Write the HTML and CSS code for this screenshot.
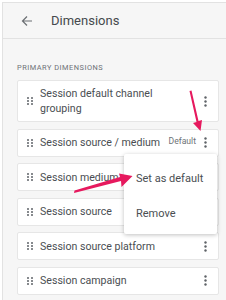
FILE: index.html
```html
<!DOCTYPE html>
<html lang="en">
<head>
    <meta charset="UTF-8">
    <meta name="viewport" content="width=device-width, initial-scale=1.0">
    <title>Dimensions</title>
    <link rel="stylesheet" href="styles.css">
</head>
<body>

    <div class="panel">
        <div class="head">
            <svg class="back" width="12" height="12" viewBox="0 0 12 12">
                <path d="M11 6H2M6 1.5L1.5 6L6 10.5" fill="none" stroke="#6b6f73" stroke-width="1.2"/>
            </svg>
            <span class="title">Dimensions</span>
        </div>

        <div class="content">
            <div class="label">PRIMARY DIMENSIONS</div>

            <div class="list">
                <div class="card tall">
                    <svg class="handle" width="6" height="8" viewBox="0 0 6 8"><g fill="#5f6368"><circle cx="1" cy="1" r="1"/><circle cx="5" cy="1" r="1"/><circle cx="1" cy="4" r="1"/><circle cx="5" cy="4" r="1"/><circle cx="1" cy="7" r="1"/><circle cx="5" cy="7" r="1"/></g></svg>
                    <span class="name">Session default channel grouping</span>
                    <svg class="kebab" width="3" height="11" viewBox="0 0 3 11"><g fill="#5f6368"><circle cx="1.5" cy="1.5" r="1.2"/><circle cx="1.5" cy="5.5" r="1.2"/><circle cx="1.5" cy="9.5" r="1.2"/></g></svg>
                </div>
                <div class="card">
                    <svg class="handle" width="6" height="8" viewBox="0 0 6 8"><g fill="#5f6368"><circle cx="1" cy="1" r="1"/><circle cx="5" cy="1" r="1"/><circle cx="1" cy="4" r="1"/><circle cx="5" cy="4" r="1"/><circle cx="1" cy="7" r="1"/><circle cx="5" cy="7" r="1"/></g></svg>
                    <span class="name">Session source / medium</span>
                    <span class="tag">Default</span>
                    <svg class="kebab" width="3" height="11" viewBox="0 0 3 11"><g fill="#5f6368"><circle cx="1.5" cy="1.5" r="1.2"/><circle cx="1.5" cy="5.5" r="1.2"/><circle cx="1.5" cy="9.5" r="1.2"/></g></svg>
                </div>
                <div class="card">
                    <svg class="handle" width="6" height="8" viewBox="0 0 6 8"><g fill="#5f6368"><circle cx="1" cy="1" r="1"/><circle cx="5" cy="1" r="1"/><circle cx="1" cy="4" r="1"/><circle cx="5" cy="4" r="1"/><circle cx="1" cy="7" r="1"/><circle cx="5" cy="7" r="1"/></g></svg>
                    <span class="name">Session medium</span>
                    <svg class="kebab" width="3" height="11" viewBox="0 0 3 11"><g fill="#5f6368"><circle cx="1.5" cy="1.5" r="1.2"/><circle cx="1.5" cy="5.5" r="1.2"/><circle cx="1.5" cy="9.5" r="1.2"/></g></svg>
                </div>
                <div class="card">
                    <svg class="handle" width="6" height="8" viewBox="0 0 6 8"><g fill="#5f6368"><circle cx="1" cy="1" r="1"/><circle cx="5" cy="1" r="1"/><circle cx="1" cy="4" r="1"/><circle cx="5" cy="4" r="1"/><circle cx="1" cy="7" r="1"/><circle cx="5" cy="7" r="1"/></g></svg>
                    <span class="name">Session source</span>
                    <svg class="kebab" width="3" height="11" viewBox="0 0 3 11"><g fill="#5f6368"><circle cx="1.5" cy="1.5" r="1.2"/><circle cx="1.5" cy="5.5" r="1.2"/><circle cx="1.5" cy="9.5" r="1.2"/></g></svg>
                </div>
                <div class="card">
                    <svg class="handle" width="6" height="8" viewBox="0 0 6 8"><g fill="#5f6368"><circle cx="1" cy="1" r="1"/><circle cx="5" cy="1" r="1"/><circle cx="1" cy="4" r="1"/><circle cx="5" cy="4" r="1"/><circle cx="1" cy="7" r="1"/><circle cx="5" cy="7" r="1"/></g></svg>
                    <span class="name">Session source platform</span>
                    <svg class="kebab" width="3" height="11" viewBox="0 0 3 11"><g fill="#5f6368"><circle cx="1.5" cy="1.5" r="1.2"/><circle cx="1.5" cy="5.5" r="1.2"/><circle cx="1.5" cy="9.5" r="1.2"/></g></svg>
                </div>
                <div class="card">
                    <svg class="handle" width="6" height="8" viewBox="0 0 6 8"><g fill="#5f6368"><circle cx="1" cy="1" r="1"/><circle cx="5" cy="1" r="1"/><circle cx="1" cy="4" r="1"/><circle cx="5" cy="4" r="1"/><circle cx="1" cy="7" r="1"/><circle cx="5" cy="7" r="1"/></g></svg>
                    <span class="name">Session campaign</span>
                    <svg class="kebab" width="3" height="11" viewBox="0 0 3 11"><g fill="#5f6368"><circle cx="1.5" cy="1.5" r="1.2"/><circle cx="1.5" cy="5.5" r="1.2"/><circle cx="1.5" cy="9.5" r="1.2"/></g></svg>
                </div>
            </div>
        </div>

        <!-- popup menu opened from the second row -->
        <div class="menu">
            <div class="menu-item">Set as default</div>
            <div class="menu-item">Remove</div>
        </div>

        <!-- annotation arrows -->
        <svg class="arrows" width="226" height="300" viewBox="0 0 226 300">
            <polygon points="189.5,91 191.5,90.5 198.5,121 202,120 200.5,131 193,123 196.5,122" fill="#e6195e"/>
            <polygon points="74,193 74.5,190.5 120,177 119,173.5 132.5,176 121.5,187 121,181" fill="#e6195e"/>
        </svg>
    </div>

</body>
</html>
```

FILE: styles.css
```css
* {
    box-sizing: border-box;
}

body {
    margin: 0;
    background-color: #ffffff;
    font-family: Roboto, "Noto Sans", sans-serif;
    color: #3c4043;
}

.panel {
    position: relative;
    margin: 2px 0 0 2px;
    width: 224px;
    height: 298px;
    background-color: #f6f6f6;
    border-left: 1px solid #e2e2e2;
    border-top: 1px solid #e2e2e2;
    overflow: hidden;
}

.head {
    display: flex;
    align-items: center;
    height: 36px;
    padding-left: 18px;
    border-bottom: 1px solid #e2e2e2;
}

.back {
    margin-right: 18px;
}

.title {
    font-size: 13px;
    color: #45494d;
}

.content {
    padding: 24px 7px 0 14px;
}

.label {
    font-size: 7.4px;
    letter-spacing: 0.5px;
    color: #6e7276;
    margin-bottom: 8px;
}

.list {
    display: flex;
    flex-direction: column;
    gap: 6.5px;
}

.card {
    display: flex;
    align-items: center;
    height: 28px;
    padding: 0 11px 0 9px;
    background-color: #ffffff;
    border: 1px solid #e6e6e6;
    border-radius: 2px;
}

.card.tall {
    height: 42px;
}

.handle {
    margin-right: 7px;
    flex-shrink: 0;
}

.name {
    flex: 1;
    font-size: 10.6px;
    line-height: 15px;
    color: #4a4e52;
    white-space: nowrap;
}

.tall .name {
    white-space: normal;
    padding-right: 44px;
}

.tag {
    font-size: 8.6px;
    color: #6e7276;
    margin-top: -3px;
    margin-right: 8px;
}

.kebab {
    flex-shrink: 0;
}

.menu {
    position: absolute;
    left: 121px;
    top: 151px;
    width: 93px;
    height: 80px;
    padding-top: 7px;
    background-color: #ffffff;
    border-radius: 2px;
    box-shadow: 0 1px 4px rgba(0, 0, 0, 0.25);
}

.menu-item {
    height: 35px;
    line-height: 35px;
    padding-left: 12px;
    font-size: 11px;
    color: #4a4e52;
}

.arrows {
    position: absolute;
    left: -3px;
    top: -3px;
}
```
